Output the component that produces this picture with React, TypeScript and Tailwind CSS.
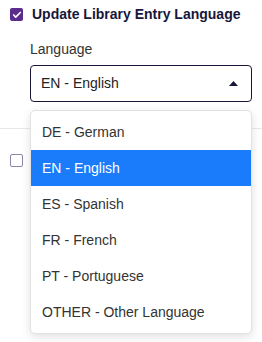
import { Check } from 'lucide-react';

const languages = [
  { code: 'DE', name: 'German' },
  { code: 'EN', name: 'English' },
  { code: 'ES', name: 'Spanish' },
  { code: 'FR', name: 'French' },
  { code: 'PT', name: 'Portuguese' },
  { code: 'OTHER', name: 'Other Language' },
];

export default function App() {
  const selected = 'EN';

  return (
    <div className="relative h-[342px] w-[262px] overflow-hidden bg-white font-['Liberation_Sans',Arial,sans-serif]">
      <div className="flex items-center gap-[9px] pl-[10px] pt-[8px]">
        <span className="flex h-[13px] w-[13px] items-center justify-center rounded-[2px] bg-[#5a2d8c]">
          <Check className="h-[10px] w-[10px] text-white" strokeWidth={4} />
        </span>
        <span className="text-[14px] font-bold leading-[13px] text-[#17173a]">Update Library Entry Language</span>
      </div>

      <div className="pl-[30px] pr-[10px] pt-[19px]">
        <div className="text-[14px] leading-[18px] text-[#333]">Language</div>
        <div className="mt-[7px] flex h-[37px] items-center justify-between rounded-[4px] border-[1.5px] border-[#17173a] pl-[10px] pr-[12px]">
          <span className="text-[14px] text-[#222]">EN - English</span>
          <svg width="9" height="5" viewBox="0 0 9 5" className="mr-[1px]">
            <path d="M0 5 L4.5 0 L9 5 Z" fill="#17173a" />
          </svg>
        </div>
      </div>

      <div className="mt-[26px] h-px bg-[#e8e8ea]" />

      <div className="pl-[10px] pt-[25px]">
        <span className="block h-[13px] w-[13px] rounded-[2px] border-[1.5px] border-[#8e86a8] bg-white" />
      </div>

      <div className="absolute left-[30px] top-[110px] w-[222px] rounded-[5px] border border-[#e2e2e2] bg-white py-[3px] shadow-[0_3px_10px_rgba(0,0,0,0.12)]">
        {languages.map((l) => (
          <div
            key={l.code}
            className={
              l.code === selected
                ? 'flex h-[36px] items-center bg-[#1a7cfb] pl-[11px] text-[14px] text-white'
                : 'flex h-[36px] items-center pl-[11px] text-[14px] text-[#333]'
            }
          >
            {l.code} - {l.name}
          </div>
        ))}
      </div>
    </div>
  );
}
